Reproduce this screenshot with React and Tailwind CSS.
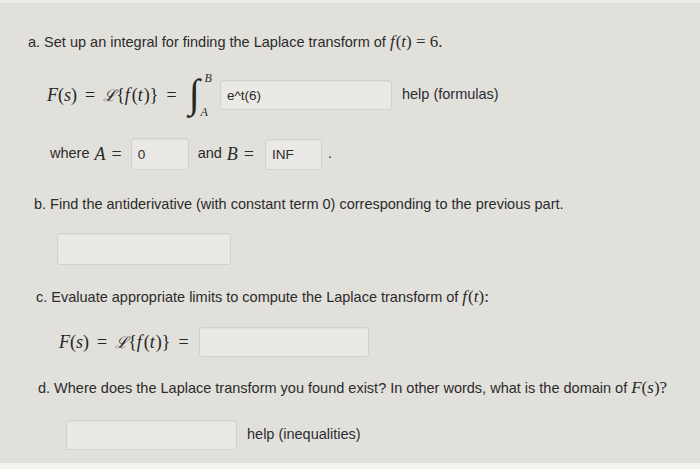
import React from "react";

const MATH = "font-['Liberation_Serif','DejaVu_Serif',serif]";

function Box({ value = "", w = "w-[172px]", h = "h-[30px]" }) {
  return (
    <input
      readOnly
      value={value}
      className={`${w} ${h} bg-[#ebe9e5] border border-[#d3d1cc] rounded-[3px] px-[6px] text-[13.5px] text-[#2b2b2b] outline-none shadow-[inset_0_1px_1px_rgba(0,0,0,0.04)]`}
    />
  );
}

// F(s) = L{f(t)} =
function LaplaceLhs() {
  return (
    <span className={`${MATH} text-[18px] text-[#262626] whitespace-nowrap`}>
      <span className="italic">F</span>(<span className="italic">s</span>)
      <span className="mx-[8px]">=</span>
      <span className="font-['DejaVu_Serif',serif] italic text-[16px]">ℒ</span>
      {"{"}
      <span className="italic mr-[2px]">f</span>(<span className="italic mr-[1px]">t</span>)
      {"}"}
      <span className="mx-[8px]">=</span>
    </span>
  );
}

function Integral() {
  return (
    <span className="flex items-center h-[30px]">
      <span className={`${MATH} text-[40px] leading-none italic text-[#262626] -mt-[2px]`}>∫</span>
      <span className={`${MATH} italic text-[12px] flex flex-col justify-between h-[46px] ml-[1px] leading-none`}>
        <span className="ml-[4px]">B</span>
        <span>A</span>
      </span>
    </span>
  );
}

export default function App() {
  return (
    <div className="w-[700px] h-[469px] bg-[#e2e0db] flex flex-col font-['Liberation_Sans',Arial,sans-serif] text-[14.5px] text-[#2b2b2b] overflow-hidden">
      <div className="h-[3px] bg-[#ecebe8]" />

      <div className="flex-1 flex flex-col">
        {/* part a */}
        <div className="mt-[31px] ml-[28px] leading-[16px] h-[16px] whitespace-nowrap">
          a. Set up an integral for finding the Laplace transform of{" "}
          <span className={`${MATH} text-[17px]`}>
            <span className="italic mr-[1px]">f</span>(<span className="italic">t</span>) = 6.
          </span>
        </div>

        <div className="mt-[30px] ml-[47px] h-[30px] flex items-center">
          <LaplaceLhs />
          <span className="ml-[4px]">
            <Integral />
          </span>
          <span className="ml-[8px]">
            <Box value="e^t(6)" w="w-[172px]" />
          </span>
          <span className="ml-[10px] text-[#2b2d36]">help (formulas)</span>
        </div>

        <div className="mt-[28px] ml-[50px] h-[32px] flex items-center">
          <span>where</span>
          <span className={`${MATH} italic text-[18px] ml-[5px]`}>A</span>
          <span className={`${MATH} text-[18px] ml-[6px]`}>=</span>
          <span className="ml-[9px]">
            <Box value="0" w="w-[58px]" h="h-[32px]" />
          </span>
          <span className="ml-[9px]">and</span>
          <span className={`${MATH} italic text-[18px] ml-[5px]`}>B</span>
          <span className={`${MATH} text-[18px] ml-[6px]`}>=</span>
          <span className="ml-[11px]">
            <Box value="INF" w="w-[57px]" h="h-[31px]" />
          </span>
          <span className="ml-[6px]">.</span>
        </div>

        {/* part b */}
        <div className="mt-[26px] ml-[34px] leading-[16px] h-[16px] whitespace-nowrap">
          b. Find the antiderivative (with constant term 0) corresponding to the previous part.
        </div>
        <div className="mt-[21px] ml-[57px] h-[32px] flex items-center">
          <Box w="w-[174px]" h="h-[32px]" />
        </div>

        {/* part c */}
        <div className="mt-[24px] ml-[36px] leading-[16px] h-[16px] whitespace-nowrap">
          c. Evaluate appropriate limits to compute the Laplace transform of{" "}
          <span className={`${MATH} text-[17px]`}>
            <span className="italic mr-[1px]">f</span>(<span className="italic">t</span>):
          </span>
        </div>
        <div className="mt-[22px] ml-[59px] h-[30px] flex items-center">
          <LaplaceLhs />
          <span className="ml-[2px]">
            <Box w="w-[170px]" />
          </span>
        </div>

        {/* part d */}
        <div className="mt-[23px] ml-[38px] leading-[16px] h-[16px] whitespace-nowrap">
          d. Where does the Laplace transform you found exist? In other words, what is the domain of{" "}
          <span className={`${MATH} text-[17px]`}>
            <span className="italic">F</span>(<span className="italic">s</span>)?
          </span>
        </div>
        <div className="mt-[24px] ml-[66px] h-[30px] flex items-center">
          <Box w="w-[171px]" />
          <span className="ml-[10px] text-[#2b2d36]">help (inequalities)</span>
        </div>
      </div>

      <div className="h-[6px] bg-[#f3f2ef]" />
    </div>
  );
}
